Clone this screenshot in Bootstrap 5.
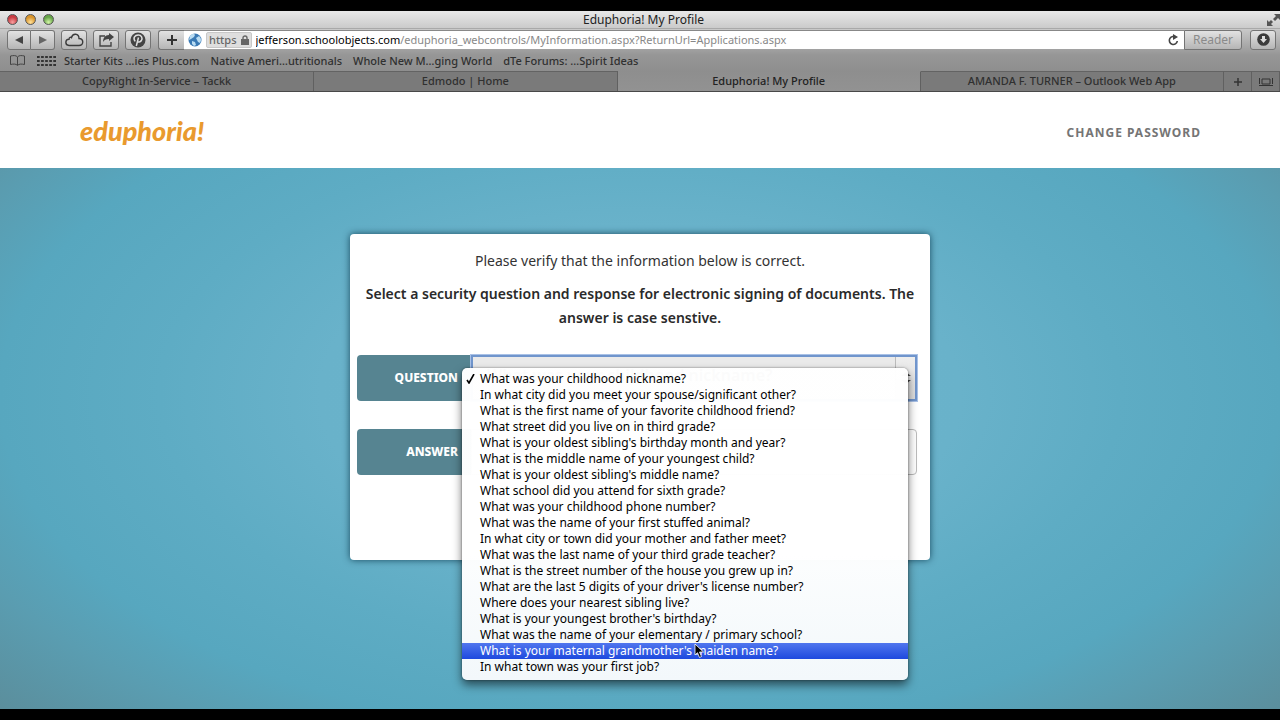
<!DOCTYPE html>
<html lang="en">
<head>
<meta charset="utf-8">
<meta name="viewport" content="width=device-width, initial-scale=1">
<title>Eduphoria! My Profile</title>
<link href="https://cdn.jsdelivr.net/npm/bootstrap@5.3.0/dist/css/bootstrap.min.css" rel="stylesheet">
<style>
body{background:#000;padding:11px 0;font-family:"Noto Sans","Open Sans",sans-serif;font-size:12px;line-height:16px;color:#333}
svg{display:block;flex:none}
.chrome{background:linear-gradient(#e8e8e8,#c9c9c9 18px,#969696 44px,#8e8e8e 60px,#929292);color:#222;border-bottom:1px solid #484848}
.titlebar{height:18px;padding:0 0 0 7px;border-bottom:1px solid #a9a9a9}
.titlebar .side{flex:1 1 0}
.light{width:11px;height:11px;border-radius:50%;border:1px solid #555;padding:0}
.light-r{background:radial-gradient(circle at 50% 80%,#f9a0a0,#c83c43 60%)}
.light-y{background:radial-gradient(circle at 50% 80%,#ffe19a,#d9952c 60%)}
.light-g{background:radial-gradient(circle at 50% 80%,#d4f5a8,#66a548 60%)}
.toolbar{padding:0 4px 0 7px;height:21px}
.toolgap{gap:6px;margin-right:7px}
.tool{height:20px;width:26px;border:1px solid #747474;border-radius:3px;background:linear-gradient(#e2e2e2,#b5b5b5);padding:0;color:#333;display:flex;align-items:center;justify-content:center}
.tool-nav{width:24px}
.tool-add{border-radius:3px 0 0 3px;border-right:0}
.tool-read{border-radius:0 3px 3px 0;width:58px;color:#8a8a8a;font-size:12px}
.address{height:19px;background:#fff;border-top:1px solid #888;padding:0 5px 0 4px;min-width:0}
.secure{background:#dedede;border:1px solid #c8c8c8;border-radius:2px;height:16px;color:#666;font-size:11px;line-height:14px;font-weight:500;padding:0 2px}
.url{color:#888;font-size:11px;line-height:16px}
.url b{font-weight:400;color:#000}
.bookmarks{height:21px;padding:0 10px;font-size:11px;font-weight:500}
.bookmark-list{gap:11px}
.bookmarks a,.tabstrip a{color:#303030;text-decoration:none;white-space:nowrap}
.tabstrip{height:20px;font-size:11px;font-weight:500}
.tabstrip a{flex:1 1 0;text-align:center;line-height:18px;background:#7a7a7a;border-top:1px solid #636363;border-right:1px solid #606060;color:#303030}
.tabstrip a:first-child{flex-basis:12px}
.tabstrip a.current{background:none;border-top-color:transparent;color:#222}
.tabstrip button{width:28px;padding:0;border:0;border-top:1px solid #636363;border-right:1px solid #606060;background:#7a7a7a;color:#333;display:flex;align-items:center;justify-content:center}
.site-head{background:#fff;height:76px;padding:2px 79px 0 80px}
.logo{font:italic 900 27px/32px Lato,sans-serif;color:#e99a2e;text-decoration:none}
.pwd{font-size:12px;font-weight:700;letter-spacing:1px;color:#757575;text-decoration:none;padding-top:4px}
.stage{background:radial-gradient(ellipse 50% 63% at 50% 42%,#6cb5cc 0,#69b2ca 50%,#5eacc4 75%,#57a7bf 100%,#5a9db1 115%,#5b8e9c 136%);padding:66px 16px 40px}
.panel{max-width:580px;background:#fff;border-radius:4px;box-shadow:0 0 7px rgba(0,40,60,.75);padding:15px 7px 85px}
.panel p{font-size:14px;line-height:24px;text-align:center;margin:0 0 9px}
.panel .lead-in{margin-bottom:25px;font-weight:600;color:#2a2a2a}
.field{height:46px;margin-right:6px}
.field + .field{margin-top:28px}
.field label{width:114px;background:#568491;border-radius:4px 0 0 4px;color:#fff;font-size:12px;font-weight:800;padding-right:13px}
.field select{width:100%;height:100%;appearance:none;border:2px solid #7095cc;box-shadow:0 0 0 1px #a9c1e6;background:#eaeaea;outline:0;font-size:16px;font-weight:600;color:#333;padding:0 36px 7px 14px}
.field input{width:100%;height:100%;border:1px solid #bbb;border-radius:0 4px 4px 0;padding:0 14px}
.stepper{position:absolute;right:2px;top:2px;bottom:2px;width:20px;border-left:1px solid #bbb;background:linear-gradient(#eee,#ddd)}
.choices{position:absolute;left:-9px;top:13px;width:100%;z-index:5;background:linear-gradient(rgba(255,255,255,.98) 60%,#f3f8fb);border-radius:5px;box-shadow:0 5px 10px rgba(0,0,0,.55),0 0 2px rgba(0,0,0,.5);padding:3px 0 5px;margin:0;list-style:none}
.choices li{position:relative}
.choices button{display:block;width:100%;border:0;background:none;text-align:left;font-size:12px;line-height:16px;height:16px;padding:0 8px 0 18px;color:#000;white-space:nowrap}
.choices .hot{background:linear-gradient(#5076ee,#1e49de);color:#fff}
.tick{position:absolute;left:4px;top:3px}
.pointer{position:absolute;left:232px;top:0}
</style>
</head>
<body class="d-flex flex-column min-vh-100">
<header class="chrome">
  <div class="titlebar d-flex align-items-center">
    <div class="side d-flex" style="gap:7px">
      <button class="light light-r" aria-label="Close"></button><button class="light light-y" aria-label="Minimize"></button><button class="light light-g" aria-label="Zoom"></button>
    </div>
    <div>Eduphoria! My Profile</div>
    <div class="side d-flex justify-content-end">
      <svg width="14" height="14" viewBox="0 0 14 14" fill="#555"><path d="M8 1h6v6l-2-2-3 3-2-2 3-3zM1 7l2 2 2-2 2 2-2 2 2 2H1z"/></svg>
    </div>
  </div>
  <div class="toolbar d-flex align-items-center">
    <div class="toolgap d-flex">
      <div class="d-flex">
        <button class="tool tool-nav rounded-end-0" aria-label="Back"><svg width="10" height="8"><path d="M9 0v8L1 4z" fill="#444"/></svg></button>
        <button class="tool tool-nav rounded-start-0 border-start-0" aria-label="Forward"><svg width="10" height="8"><path d="M1 0v8l8-4z" fill="#666"/></svg></button>
      </div>
      <button class="tool" aria-label="iCloud tabs"><svg width="19" height="14" viewBox="0 0 19 14" fill="none" stroke="#3c3c3c" stroke-width="1.4"><path d="M4 12.5a3 3 0 0 1 0-6.3C4 4 6 4 6.500 4.500 7.500 0 14 0 14 5.500c5 .2 5 7 0 7z"/></svg></button>
      <button class="tool" aria-label="Share"><svg width="15" height="14" viewBox="0 0 15 14"><path d="M6 3H1v10h11V9" fill="none" stroke="#444" stroke-width="1.4"/><path d="M10 0l5 4-5 4V6C7 6 5 7 4 9c0-4 2-7 6-7z" fill="#444"/></svg></button>
      <button class="tool" aria-label="Pin it"><svg width="16" height="16" viewBox="0 0 16 16"><circle cx="8" cy="8" r="7.500" fill="#444"/><path d="M5.200 9.400C2.500 6 5 3 8.200 3c3.400 0 4.600 3 3.200 5.500C10.200 10.500 8 10.300 7.500 9M8.500 5.500L6.300 14" fill="none" stroke="#ddd" stroke-width="1.500"/></svg></button>
    </div>
    <button class="tool tool-add" aria-label="Add bookmark"><svg width="10" height="10"><path d="M5 0v10M0 5h10" stroke="#333" stroke-width="2"/></svg></button>
    <div class="address d-flex align-items-center flex-grow-1">
      <svg width="14" height="14" viewBox="0 0 14 14"><circle cx="7" cy="7" r="6.500" fill="#3979b4"/><path d="M2 3c2-3 5-2 5-1L6 4 3 6 1 7zM8 5l3-2c3 3 2 5 1 7l-2-1zM4 8l3 1 1 3-2 1-2-2z" fill="#b9dcf2"/></svg>
      <span class="secure d-flex align-items-center mx-1">https<svg class="ms-1" width="8" height="10" viewBox="0 0 8 10"><path d="M0 4h8v6H0z" fill="#666"/><path d="M2 5V3a2 2 0 0 1 4 0v2" fill="none" stroke="#666" stroke-width="1.400"/></svg></span>
      <span class="url flex-grow-1 text-truncate"><b>jefferson.schoolobjects.com</b>/eduphoria_webcontrols/MyInformation.aspx?ReturnUrl=Applications.aspx</span>
      <svg width="11" height="12" viewBox="0 0 11 12"><path d="M8 3.500A4 4 0 1 0 9.300 7" fill="none" stroke="#444" stroke-width="1.600"/><path d="M5 0l5 3-5 3z" fill="#444"/></svg>
    </div>
    <button class="tool tool-read me-2">Reader</button>
    <button class="tool" aria-label="Downloads"><svg width="13" height="13" viewBox="0 0 13 13"><circle cx="6.500" cy="6.500" r="6.300" fill="#3b3b3b"/><path d="M5 3h3v3h2L6.500 10 3 6h2z" fill="#ddd"/></svg></button>
  </div>
  <nav class="bookmarks d-flex align-items-center">
    <svg width="15" height="11" viewBox="0 0 15 11" fill="none" stroke="#444"><path d="M7.500 10V2C6 0 3 .5.500 1v8.500C3 9 6 8.500 7.500 10.500 9 8.500 12 9 14.500 9.500V1C12 .5 9 0 7.500 2"/></svg>
    <svg class="mx-2 ps-1" width="23" height="10" viewBox="0 0 14 10" preserveAspectRatio="none"><path d="M0 1h14M0 5h14M0 9h14" stroke="#333" stroke-width="2" stroke-dasharray="2 1"/></svg>
    <div class="bookmark-list d-flex"><a href="#">Starter Kits …ies Plus.com</a><a href="#">Native Ameri…utritionals</a><a href="#">Whole New M…ging World</a><a href="#">dTe Forums: …Spirit Ideas</a></div>
  </nav>
  <nav class="tabstrip d-flex">
    <a href="#">CopyRight In-Service – Tackk</a><a href="#">Edmodo | Home</a><a href="#" class="current">Eduphoria! My Profile</a><a href="#">AMANDA F. TURNER – Outlook Web App</a>
    <button aria-label="New tab"><svg width="8" height="8"><path d="M4 0v8M0 4h8" stroke="#333" stroke-width="1.500"/></svg></button>
    <button aria-label="Show all tabs"><svg width="14" height="8" viewBox="0 0 14 8"><path d="M.5 0v6M13.500 0v6M3 1h8v5H3zM0 7.500h14" fill="none" stroke="#333"/></svg></button>
  </nav>
</header>
<div class="site-head d-flex align-items-center justify-content-between">
  <a class="logo" href="#">eduphoria!</a>
  <a class="pwd" href="#">CHANGE PASSWORD</a>
</div>
<main class="stage flex-grow-1">
  <form class="panel mx-auto">
    <p>Please verify that the information below is correct.</p>
    <p class="lead-in">Select a security question and response for electronic signing of documents. The answer is case senstive.</p>
    <div class="field d-flex">
      <label for="question" class="d-flex align-items-center justify-content-end flex-shrink-0">QUESTION</label>
      <div class="position-relative flex-grow-1">
        <select id="question"><option>What was your childhood nickname?</option></select>
        <span class="stepper d-flex align-items-center justify-content-center"><svg width="12" height="12"><path d="M6 0l5 4H1zM6 12l5-4H1z" fill="#444"/></svg></span>
        <ul class="choices">
          <li><svg class="tick" width="9" height="10" viewBox="0 0 9 10"><path d="M1 6l2 3L8 0" fill="none" stroke="#000" stroke-width="1.600"/></svg><button type="button">What was your childhood nickname?</button></li>
          <li><button type="button">In what city did you meet your spouse/significant other?</button></li>
          <li><button type="button">What is the first name of your favorite childhood friend?</button></li>
          <li><button type="button">What street did you live on in third grade?</button></li>
          <li><button type="button">What is your oldest sibling's birthday month and year?</button></li>
          <li><button type="button">What is the middle name of your youngest child?</button></li>
          <li><button type="button">What is your oldest sibling's middle name?</button></li>
          <li><button type="button">What school did you attend for sixth grade?</button></li>
          <li><button type="button">What was your childhood phone number?</button></li>
          <li><button type="button">What was the name of your first stuffed animal?</button></li>
          <li><button type="button">In what city or town did your mother and father meet?</button></li>
          <li><button type="button">What was the last name of your third grade teacher?</button></li>
          <li><button type="button">What is the street number of the house you grew up in?</button></li>
          <li><button type="button">What are the last 5 digits of your driver's license number?</button></li>
          <li><button type="button">Where does your nearest sibling live?</button></li>
          <li><button type="button">What is your youngest brother's birthday?</button></li>
          <li><button type="button">What was the name of your elementary / primary school?</button></li>
          <li><button type="button" class="hot">What is your maternal grandmother's maiden name?</button><svg class="pointer" width="11" height="16" viewBox="0 0 11 16"><path d="M1 1v11l2.500-2.300L5.500 14.500l2-1L5.500 9H9.500z" fill="#000" stroke="#fff" stroke-width=".8"/></svg></li>
          <li><button type="button">In what town was your first job?</button></li>
        </ul>
      </div>
    </div>
    <div class="field d-flex">
      <label for="answer" class="d-flex align-items-center justify-content-end flex-shrink-0">ANSWER</label>
      <div class="flex-grow-1"><input id="answer" type="text"></div>
    </div>
  </form>
</main>
<script src="https://cdn.jsdelivr.net/npm/bootstrap@5.3.0/dist/js/bootstrap.bundle.min.js"></script>
</body>
</html>
